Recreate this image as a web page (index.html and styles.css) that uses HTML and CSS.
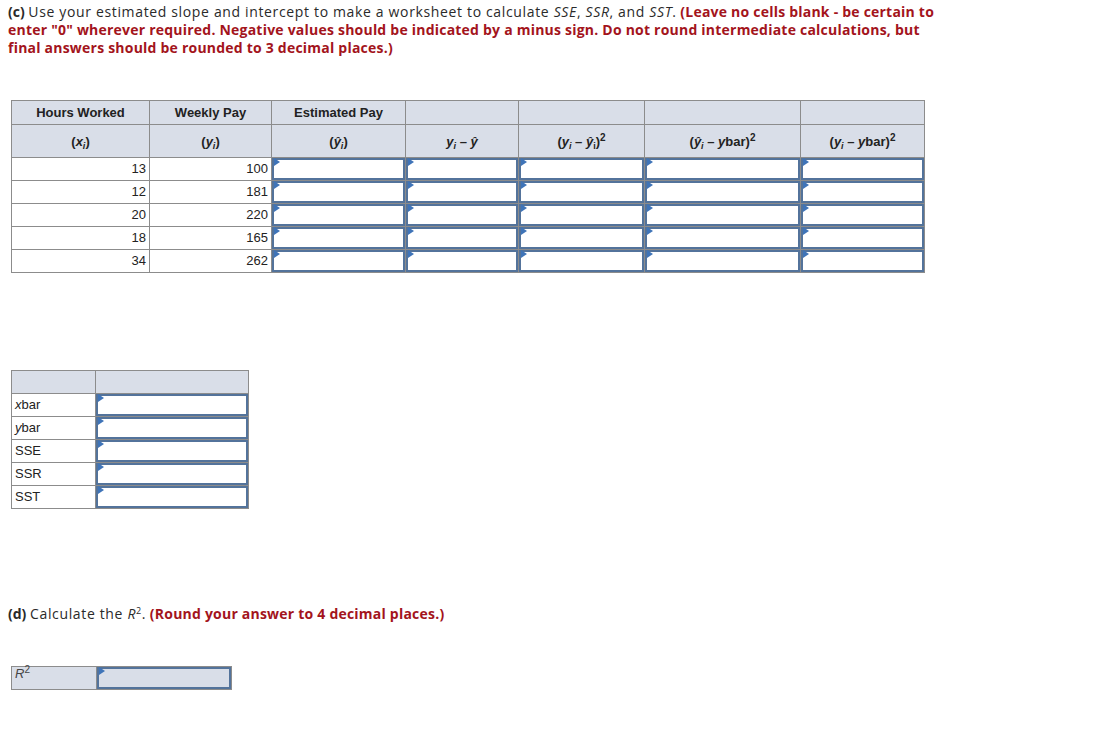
FILE: index.html
```html
<!DOCTYPE html>
<html>
<head>
<meta charset="utf-8">
<link rel="stylesheet" href="styles.css">
</head>
<body>
<div class="page">
  <p class="prompt"><b>(c)</b> <span class="plain">Use your estimated slope and intercept to make a worksheet to calculate <i>SSE</i>, <i>SSR</i>, and <i>SST</i>.</span> <span class="red">(Leave no cells blank - be certain to enter "0" wherever required. Negative values should be indicated by a minus sign. Do not round intermediate calculations, but final answers should be rounded to 3 decimal places.)</span></p>

  <table class="grid main">
    <colgroup>
      <col class="c1"><col class="c2"><col class="c3"><col class="c4"><col class="c5"><col class="c6"><col class="c7">
    </colgroup>
    <thead>
      <tr class="h1">
        <th>Hours Worked</th><th>Weekly Pay</th><th>Estimated Pay</th><th></th><th></th><th></th><th></th>
      </tr>
      <tr class="h2">
        <th>(<i>x<sub>i</sub></i>)</th>
        <th>(<i>y<sub>i</sub></i>)</th>
        <th>(<i>ŷ<sub>i</sub></i>)</th>
        <th><i>y<sub>i</sub></i> – <i>ŷ</i></th>
        <th>(<i>y<sub>i</sub></i> – <i>ŷ</i><sub>i</sub>)<sup>2</sup></th>
        <th>(<i>ŷ<sub>i</sub></i> – <i>y</i>bar)<sup>2</sup></th>
        <th>(<i>y<sub>i</sub></i> – <i>y</i>bar)<sup>2</sup></th>
      </tr>
    </thead>
    <tbody>
      <tr><td class="num">13</td><td class="num">100</td><td class="in"><div class="box"></div></td><td class="in"><div class="box"></div></td><td class="in"><div class="box"></div></td><td class="in"><div class="box"></div></td><td class="in"><div class="box"></div></td></tr>
      <tr><td class="num">12</td><td class="num">181</td><td class="in"><div class="box"></div></td><td class="in"><div class="box"></div></td><td class="in"><div class="box"></div></td><td class="in"><div class="box"></div></td><td class="in"><div class="box"></div></td></tr>
      <tr><td class="num">20</td><td class="num">220</td><td class="in"><div class="box"></div></td><td class="in"><div class="box"></div></td><td class="in"><div class="box"></div></td><td class="in"><div class="box"></div></td><td class="in"><div class="box"></div></td></tr>
      <tr><td class="num">18</td><td class="num">165</td><td class="in"><div class="box"></div></td><td class="in"><div class="box"></div></td><td class="in"><div class="box"></div></td><td class="in"><div class="box"></div></td><td class="in"><div class="box"></div></td></tr>
      <tr><td class="num">34</td><td class="num">262</td><td class="in"><div class="box"></div></td><td class="in"><div class="box"></div></td><td class="in"><div class="box"></div></td><td class="in"><div class="box"></div></td><td class="in"><div class="box"></div></td></tr>
    </tbody>
  </table>

  <table class="grid small">
    <colgroup><col class="s1"><col class="s2"></colgroup>
    <thead><tr class="sh"><th></th><th></th></tr></thead>
    <tbody>
      <tr><td class="lbl"><i>x</i>bar</td><td class="in"><div class="box"></div></td></tr>
      <tr><td class="lbl"><i>y</i>bar</td><td class="in"><div class="box"></div></td></tr>
      <tr><td class="lbl">SSE</td><td class="in"><div class="box"></div></td></tr>
      <tr><td class="lbl">SSR</td><td class="in"><div class="box"></div></td></tr>
      <tr><td class="lbl">SST</td><td class="in"><div class="box"></div></td></tr>
    </tbody>
  </table>

  <p class="prompt partd"><b>(d)</b> <span class="plain">Calculate the <i>R</i><sup class="sq">2</sup>.</span> <span class="red">(Round your answer to 4 decimal places.)</span></p>

  <table class="grid rsq">
    <colgroup><col class="r1"><col class="r2"></colgroup>
    <tbody>
      <tr><td class="lbl rl"><i>R</i><sup class="sq">2</sup></td><td class="in"><div class="box shaded"></div></td></tr>
    </tbody>
  </table>
</div>
</body>
</html>
```

FILE: styles.css
```css
html, body {
  margin: 0;
  padding: 0;
  background: #ffffff;
}

.page {
  padding: 3px 8px 0 8px;
}

.prompt {
  margin: 0;
  font-family: "Open Sans", Lato, sans-serif;
  font-size: 14px;
  line-height: 18px;
  color: #2a2a2a;
  width: 940px;
}

.prompt b {
  font-weight: 700;
}

.plain {
  letter-spacing: 0.65px;
}

.red {
  color: #a3141c;
  font-weight: 700;
  letter-spacing: 0.22px;
}

.grid {
  border-collapse: collapse;
  table-layout: fixed;
  font-family: "Liberation Sans", Arial, sans-serif;
  font-size: 13px;
  color: #222222;
}

.grid th,
.grid td {
  border: 1px solid #8c8c8c;
  padding: 0;
}

.grid th {
  background: #d9dee8;
  font-weight: 700;
  text-align: center;
}

.main {
  margin: 43px 0 0 3px;
  width: 913px;
}

.c1 { width: 138px; }
.c2 { width: 122px; }
.c3 { width: 134px; }
.c4 { width: 113px; }
.c5 { width: 126px; }
.c6 { width: 156px; }
.c7 { width: 124px; }

.h1 th {
  height: 23px;
}

.h2 th {
  height: 32px;
}

.grid sub {
  font-size: 9px;
  vertical-align: -3px;
  line-height: 0;
}

.grid sup {
  font-size: 10px;
  vertical-align: 5px;
  line-height: 0;
}

.main tbody td {
  height: 22px;
}

.num {
  text-align: right;
  padding-right: 3px !important;
  vertical-align: middle;
  line-height: 14px;
}

.box {
  position: relative;
  box-sizing: border-box;
  height: 22px;
  border: 2px solid #53739b;
  background: #ffffff;
}

.box::before {
  content: "";
  position: absolute;
  left: 0;
  top: 0;
  width: 0;
  height: 0;
  border-top: 4px solid transparent;
  border-bottom: 4px solid transparent;
  border-left: 6px solid #3f74b8;
  margin-top: -2px;
}

.small {
  margin: 97px 0 0 3px;
  width: 237px;
}

.s1 { width: 84px; }
.s2 { width: 153px; }

.sh th {
  height: 22px;
}

.small tbody td {
  height: 22px;
}

.lbl {
  text-align: left;
  padding-left: 3px !important;
  line-height: 14px;
}

.partd {
  margin-top: 96px;
}

.sq {
  font-size: 9px;
  vertical-align: 5px;
  line-height: 0;
}

.rsq {
  margin: 43px 0 0 3px;
  width: 220px;
}

.r1 { width: 85px; }
.r2 { width: 135px; }

.rsq td {
  height: 22px;
  background: #d9dee8;
}

.rl {
  color: #444444;
  vertical-align: top;
}

.shaded {
  background: #d9dee8;
}
```
